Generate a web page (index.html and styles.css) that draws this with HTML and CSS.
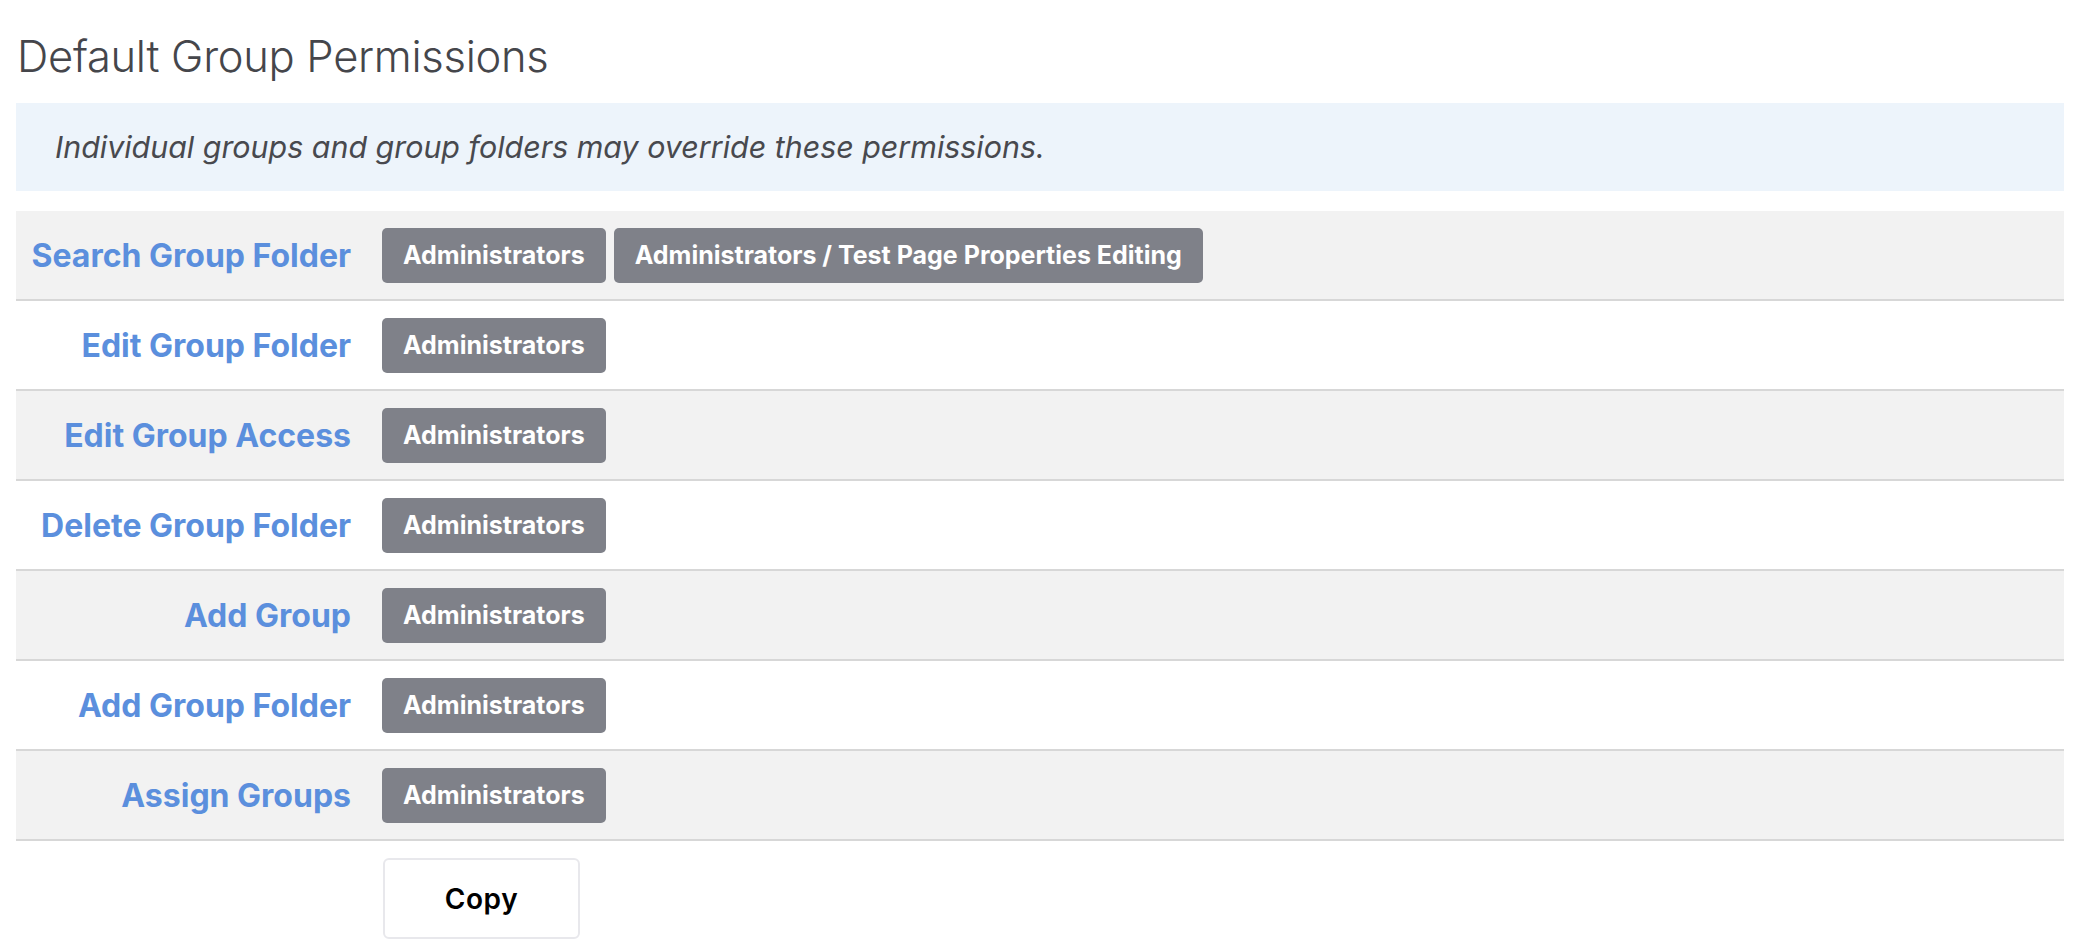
FILE: index.html
```html
<!DOCTYPE html>
<html lang="en">
<head>
<meta charset="utf-8">
<title>Default Group Permissions</title>
<link rel="stylesheet" href="styles.css">
</head>
<body>
<div class="page">
  <h1 class="title">Default Group Permissions</h1>
  <div class="notice">Individual groups and group folders may override these permissions.</div>
  <div class="perm-table">
    <div class="perm-row odd">
      <div class="perm-label">Search Group Folder</div>
      <div class="perm-groups">
        <span class="badge">Administrators</span>
        <span class="badge">Administrators / Test Page Properties Editing</span>
      </div>
    </div>
    <div class="perm-row">
      <div class="perm-label">Edit Group Folder</div>
      <div class="perm-groups"><span class="badge">Administrators</span></div>
    </div>
    <div class="perm-row odd">
      <div class="perm-label">Edit Group Access</div>
      <div class="perm-groups"><span class="badge">Administrators</span></div>
    </div>
    <div class="perm-row">
      <div class="perm-label">Delete Group Folder</div>
      <div class="perm-groups"><span class="badge">Administrators</span></div>
    </div>
    <div class="perm-row odd">
      <div class="perm-label">Add Group</div>
      <div class="perm-groups"><span class="badge">Administrators</span></div>
    </div>
    <div class="perm-row">
      <div class="perm-label">Add Group Folder</div>
      <div class="perm-groups"><span class="badge">Administrators</span></div>
    </div>
    <div class="perm-row odd">
      <div class="perm-label">Assign Groups</div>
      <div class="perm-groups"><span class="badge">Administrators</span></div>
    </div>
  </div>
  <div class="actions">
    <button class="copy-btn" type="button">Copy</button>
  </div>
</div>
</body>
</html>
```
FILE: styles.css
```css
html, body {
  margin: 0;
  padding: 0;
  background: #ffffff;
}

body {
  font-family: Inter, "Noto Sans", "Liberation Sans", sans-serif;
  color: #45464b;
}

.page {
  padding: 0 24px 0 16px;
}

.title {
  margin: 33px 0 0 1px;
  font-size: 43.5px;
  font-weight: 300;
  line-height: 46px;
  color: #45464b;
  letter-spacing: -0.3px;
}

.notice {
  margin-top: 24px;
  height: 88px;
  box-sizing: border-box;
  display: flex;
  align-items: center;
  padding-left: 39px;
  background: #edf4fb;
  font-size: 30.4px;
  font-style: italic;
  font-weight: 400;
  color: #48494e;
}

.perm-table {
  margin-top: 20px;
}

.perm-row {
  display: flex;
  align-items: center;
  height: 90px;
  box-sizing: border-box;
  border-bottom: 2px solid #d7d7d7;
  background: #ffffff;
}

.perm-row.odd {
  background: #f2f2f2;
}

.perm-label {
  width: 335px;
  flex: none;
  text-align: right;
  font-size: 32px;
  font-weight: 700;
  color: #5b8fdd;
}

.perm-groups {
  display: flex;
  gap: 8px;
  margin-left: 31px;
}

.badge {
  display: inline-flex;
  align-items: center;
  height: 55px;
  padding: 0 21px;
  border-radius: 5px;
  background: #7f8189;
  color: #ffffff;
  font-size: 25px;
  font-weight: 700;
}

.actions {
  padding: 17px 0 0 367px;
}

.copy-btn {
  width: 197px;
  height: 81px;
  border: 2px solid #e8e8ec;
  border-radius: 6px;
  background: #ffffff;
  color: #000000;
  font-family: Inter, "Noto Sans", "Liberation Sans", sans-serif;
  font-size: 28px;
  font-weight: 600;
  letter-spacing: 0.6px;
}
```
